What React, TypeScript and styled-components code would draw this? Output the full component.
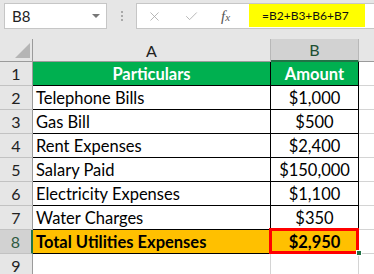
import React from "react";
import styled, { createGlobalStyle } from "styled-components";
import { X, Check } from "lucide-react";

const rows = [
  { name: "Telephone Bills", amount: "$1,000" },
  { name: "Gas Bill", amount: "$500" },
  { name: "Rent Expenses", amount: "$2,400" },
  { name: "Salary Paid", amount: "$150,000" },
  { name: "Electricity Expenses", amount: "$1,100" },
  { name: "Water Charges", amount: "$350" },
];

const App: React.FC = () => {
  return (
    <Page>
      <GlobalStyle />
      <FormulaBar>
        <NameBox>
          <span>B8</span>
          <Caret />
        </NameBox>
        <Dots>
          <i />
          <i />
          <i />
        </Dots>
        <FormulaBox>
          <Tools>
            <X size={15} strokeWidth={1.3} color="#a8a8a8" />
            <Check size={15} strokeWidth={1.3} color="#a8a8a8" />
            <Fx>
              f<small>x</small>
            </Fx>
          </Tools>
          <FormulaInput>=B2+B3+B6+B7</FormulaInput>
        </FormulaBox>
      </FormulaBar>

      <Sheet>
        <Corner>
          <Triangle />
        </Corner>
        <ColHead>A</ColHead>
        <ColHead $selected>B</ColHead>
        <ColHead $last />

        <RowHead>1</RowHead>
        <Cell $fill="#00b050" $bold $color="#fff" $align="center">
          Particulars
        </Cell>
        <Cell $fill="#00b050" $bold $color="#fff" $align="center">
          Amount
        </Cell>
        <EmptyCell $last />

        {rows.map((r, i) => (
          <React.Fragment key={r.name}>
            <RowHead>{i + 2}</RowHead>
            <Cell>{r.name}</Cell>
            <Cell $align="center">{r.amount}</Cell>
            <EmptyCell $last />
          </React.Fragment>
        ))}

        <RowHead $selected>8</RowHead>
        <Cell $fill="#ffc000" $bold>
          Total Utilities Expenses
        </Cell>
        <Cell $fill="#ffc000" $bold $align="center">
          $2,950
          <RedBox />
          <FillHandle />
        </Cell>
        <EmptyCell $last />

        <RowHead>9</RowHead>
        <EmptyCell />
        <EmptyCell />
        <EmptyCell $last />
      </Sheet>
    </Page>
  );
};

const GlobalStyle = createGlobalStyle`
  body {
    margin: 0;
    background: #fff;
    overflow: hidden;
  }
`;

const Page = styled.div`
  width: 374px;
  height: 274px;
  overflow: hidden;
  font-family: Lato, "Liberation Sans", sans-serif;
`;

const FormulaBar = styled.div`
  height: 39px;
  box-sizing: border-box;
  padding: 3px 0 0 4px;
  background: #e6e6e6;
  display: flex;
  align-items: flex-start;
`;

const NameBox = styled.div`
  width: 103px;
  height: 26px;
  box-sizing: border-box;
  border: 1px solid #c6c6c6;
  background: #fff;
  display: flex;
  align-items: center;
  justify-content: space-between;
  padding: 0 6px 0 7px;
  font-size: 15px;
  color: #222;
`;

const Caret = styled.div`
  width: 0;
  height: 0;
  border-left: 4px solid transparent;
  border-right: 4px solid transparent;
  border-top: 4px solid #777;
`;

const Dots = styled.div`
  width: 29px;
  height: 26px;
  display: flex;
  flex-direction: column;
  align-items: center;
  justify-content: center;
  gap: 2px;
  i {
    width: 2px;
    height: 2px;
    background: #a9a9a9;
  }
`;

const FormulaBox = styled.div`
  flex: 1;
  height: 26px;
  box-sizing: border-box;
  border: 1px solid #c6c6c6;
  border-right: none;
  background: #fff;
  display: flex;
  align-items: stretch;
`;

const Tools = styled.div`
  width: 112px;
  flex: none;
  box-sizing: border-box;
  display: flex;
  align-items: center;
  padding-left: 10px;
  gap: 22px;
`;

const Fx = styled.span`
  font-family: "Liberation Serif", serif;
  font-style: italic;
  font-size: 15px;
  color: #555;
  small {
    font-size: 11px;
  }
`;

const FormulaInput = styled.div`
  width: 116px;
  flex: none;
  margin-bottom: 1px;
  background: #ffff00;
  display: flex;
  align-items: center;
  padding-left: 13px;
  box-sizing: border-box;
  font-size: 12px;
  color: #111;
`;

const Sheet = styled.div`
  display: grid;
  grid-template-columns: 33px 238px 88px 1fr;
  grid-template-rows: 23px repeat(9, 24px);
`;

const Corner = styled.div`
  background: #e6e6e6;
  border-right: 1px solid #9b9b9b;
  border-bottom: 1px solid #9b9b9b;
  display: flex;
  align-items: flex-end;
  justify-content: flex-end;
  padding: 0 2px 3px 0;
`;

const Triangle = styled.div`
  width: 0;
  height: 0;
  border-left: 15px solid transparent;
  border-bottom: 15px solid #b5b5b5;
`;

const ColHead = styled.div<{ $selected?: boolean; $last?: boolean }>`
  background: ${(p) => (p.$selected ? "#d2d2d2" : "#e6e6e6")};
  border-right: ${(p) => (p.$last ? "none" : "1px solid #b8b8b8")};
  border-bottom: ${(p) => (p.$selected ? "2px solid #217346" : "1px solid #9b9b9b")};
  display: flex;
  align-items: center;
  justify-content: center;
  font-size: 16px;
  color: ${(p) => (p.$selected ? "#1d4f33" : "#222")};
`;

const RowHead = styled.div<{ $selected?: boolean }>`
  background: ${(p) => (p.$selected ? "#d2d2d2" : "#e6e6e6")};
  border-right: ${(p) => (p.$selected ? "2px solid #217346" : "1px solid #9b9b9b")};
  border-bottom: 1px solid #c2c2c2;
  display: flex;
  align-items: center;
  justify-content: center;
  font-size: 16px;
  color: ${(p) => (p.$selected ? "#2f5a42" : "#222")};
`;

const Cell = styled.div<{
  $fill?: string;
  $bold?: boolean;
  $color?: string;
  $align?: "left" | "center";
}>`
  position: relative;
  background: ${(p) => p.$fill || "#fff"};
  border-right: 1px solid #000;
  border-bottom: 1px solid #000;
  display: flex;
  align-items: center;
  justify-content: ${(p) => (p.$align === "center" ? "center" : "flex-start")};
  padding-left: ${(p) => (p.$align === "center" ? "0" : "3px")};
  font-size: 16.5px;
  font-weight: ${(p) => (p.$bold ? 700 : 400)};
  color: ${(p) => p.$color || "#000"};
  white-space: nowrap;
`;

const EmptyCell = styled.div<{ $last?: boolean }>`
  background: #fff;
  border-right: ${(p) => (p.$last ? "none" : "1px solid #d4d4d4")};
  border-bottom: 1px solid #d4d4d4;
`;

const RedBox = styled.div`
  position: absolute;
  top: -2px;
  left: -2px;
  right: -1px;
  bottom: -1px;
  border: 3px solid #ff0000;
`;

const FillHandle = styled.div`
  position: absolute;
  right: -4px;
  bottom: -3px;
  width: 4px;
  height: 4px;
  background: #217346;
  border: 1px solid #fff;
`;

export default App;
